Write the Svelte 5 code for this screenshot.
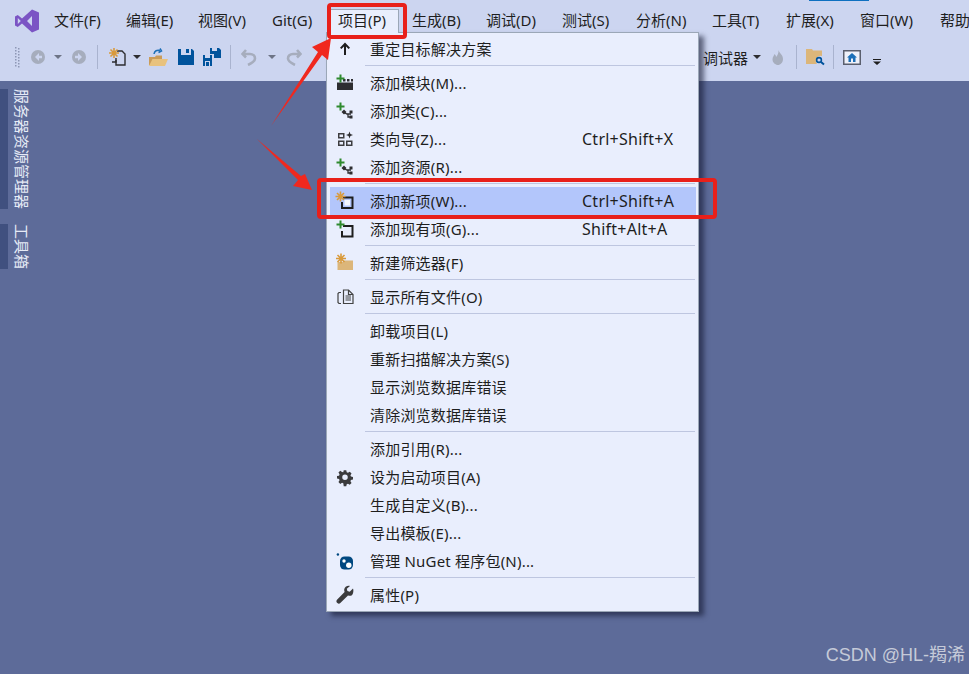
<script>
  const menus = [
    ['文件(F)', 54], ['编辑(E)', 126], ['视图(V)', 198], ['Git(G)', 272], ['项目(P)', 338], ['生成(B)', 412],
    ['调试(D)', 486], ['测试(S)', 562], ['分析(N)', 636], ['工具(T)', 712], ['扩展(X)', 786], ['窗口(W)', 860], ['帮助', 940]
  ];
  const widths = menus.map((m, i) => (i === 4 ? 61 : i < menus.length - 1 ? menus[i + 1][1] - m[1] : 60));
  const items = [
    { t: '重定目标解决方案', i: 'up' }, { sep: 1 },
    { t: '添加模块(M)...', i: 'module' },
    { t: '添加类(C)...', i: 'cls' },
    { t: '类向导(Z)...', i: 'wizard', k: 'Ctrl+Shift+X' },
    { t: '添加资源(R)...', i: 'cls' }, { sep: 1 },
    { t: '添加新项(W)...', i: 'newitem', k: 'Ctrl+Shift+A', on: 1 },
    { t: '添加现有项(G)...', i: 'existing', k: 'Shift+Alt+A' }, { sep: 1 },
    { t: '新建筛选器(F)', i: 'filter' }, { sep: 1 },
    { t: '显示所有文件(O)', i: 'files' }, { sep: 1 },
    { t: '卸载项目(L)' }, { t: '重新扫描解决方案(S)' }, { t: '显示浏览数据库错误' }, { t: '清除浏览数据库错误' }, { sep: 1 },
    { t: '添加引用(R)...' },
    { t: '设为启动项目(A)', i: 'gear' },
    { t: '生成自定义(B)...' }, { t: '导出模板(E)...' },
    { t: '管理 NuGet 程序包(N)...', i: 'nuget' }, { sep: 1 },
    { t: '属性(P)', i: 'wrench' }
  ];
</script>

{#snippet plus(x, y)}
  <path d="M{x - 1} {y - 4}h2v3h3v2h-3v3h-2v-3h-3v-2h3z" fill="#2f8a2f" />
{/snippet}
{#snippet star(x, y)}
  <path d="M{x} {y - 5}v10M{x - 5} {y}h10M{x - 3.5} {y - 3.5}l7 7M{x + 3.5} {y - 3.5}l-7 7" stroke="#d99a3c" stroke-width="1.6" fill="none" />
{/snippet}

{#snippet icon(n)}
  <svg class="mi" viewBox="0 0 20 20" width="20" height="20" aria-hidden="true">
    {#if n === 'up'}
      <path d="M10 3.5l5 5.2-1.4 1.3L11 7.4V16H9V7.4L6.4 10 5 8.7z" fill="#1e1e1e" />
    {:else if n === 'module'}
      <path d="M2 9.5h16V17H2z" fill="#2d2d30" />
      <path d="M8 6h2.5v2.5H8zM12 6h2.5v2.5H12zM16 6h2v2.5h-2z" fill="#2d2d30" />
      {@render plus(5.5, 5.5)}
    {:else if n === 'cls'}
      {@render plus(5.5, 5.5)}
      <path d="M9 11.500l3 1.500h4M13 13v3h3" fill="none" stroke="#2d2d30" stroke-width="1.300" />
      <path d="M9 8.500l2.500 2.500-2.500 2.500-2.500-2.500zM14.500 9.500h3v3h-3zM14.500 14.500h3v3h-3z" fill="#2d2d30" />
    {:else if n === 'wizard'}
      <path d="M3 4h6.500v5.500H3zM3 11.500h6.500V17H3zM11 11.500h6.500V17H11z" fill="#3d3d40" />
      <path d="M4.500 5.500h3.500v2.500h-3.500zM4.500 13h3.500v2.500h-3.500zM12.500 13h3.500v2.500h-3.500z" fill="#e9eefd" />
      <path d="M14.500 2.500l.9 2.600 2.600.9-2.600.9-.9 2.600-.9-2.600-2.600-.9 2.600-.9z" fill="#2d2d30" />
    {:else if n === 'newitem'}
      <path d="M8 6.500h9.500V17H7V11" fill="none" stroke="#1e1e1e" stroke-width="2" />
      <path d="M9.500 9h5.500v5.500H9.500z" fill="#f4f6fd" />
      {@render star(5.5, 5.5)}
    {:else if n === 'existing'}
      <path d="M8 7h9.500v10.500H7V12" fill="none" stroke="#1e1e1e" stroke-width="2" />
      {@render plus(5.5, 5.5)}
    {:else if n === 'filter'}
      <path d="M2.500 9h5l1.500-1.500h9V17h-15.500z" fill="#dcb67a" />
      {@render star(6, 5.5)}
    {:else if n === 'files'}
      <path d="M6 5.500H4l-1 1v9l1 1h2M13.500 3h-5v13.500h9.500V7.500z" fill="none" stroke="#424242" stroke-width="1.200" />
      <path d="M10.500 9h5.500M10.500 11h5.500M10.500 13h5.500M13.500 3v4.500h4.500" fill="none" stroke="#424242" stroke-width="1.200" />
    {:else if n === 'gear'}
      <path fill-rule="evenodd" fill="#3b3b3d" d="M8.500 2h3l.5 2.400 1.500.6 2.100-1.300 2.100 2.100-1.300 2.100.6 1.500 2.400.5v3l-2.400.5-.6 1.500 1.300 2.100-2.100 2.100-2.100-1.300-1.500.6-.5 2.400h-3L8 17.400l-1.500-.6-2.100 1.300-2.100-2.100 1.300-2.100-.6-1.500L.6 11.900v-3l2.400-.5.6-1.500-1.300-2.100 2.100-2.100 2.100 1.300L8 4.400zM10 7a3 3 0 1 0 0 6.500A3 3 0 0 0 10 7z" transform="translate(1.500 1.500) scale(.85)" />
    {:else if n === 'nuget'}
      <rect x="5" y="5.500" width="13" height="13" rx="4.500" fill="#004880" />
      <circle cx="2.900" cy="3.500" r="1.200" fill="#004880" />
      <circle cx="9" cy="10" r="1.700" fill="#fff" />
      <circle cx="13.800" cy="14.300" r="2.700" fill="#fff" />
    {:else if n === 'wrench'}
      <path d="M18 3.500l-3.300 3.200-2.300-.6-.6-2.300L15 1c-2.500-.8-5.500.8-5.800 3.500-.1 1 .1 1.800.4 2.600L2 14.800c-.8.8-.8 2.100 0 2.900l.4.400c.8.800 2.100.8 2.900 0l7.700-7.700c.9.300 1.700.5 2.700.4C18 10.500 19 6 18 3.500z" fill="#3b3b3d" />
    {/if}
  </svg>
{/snippet}

<div class="app">
  <header class="top">
    <div class="menubar">
      <svg class="logo" viewBox="0 0 24 24" width="24" height="24" aria-hidden="true">
        <path fill="#7b54c4" fill-rule="evenodd" d="M17 .5L24 3.500v17l-7 3L7 14.500 2.800 18 0 16.500v-9L2.800 6 7 9.500zM2.800 9v6l3-3zM17 7l-5 5 5 5z" />
      </svg>
      <nav class="menus">
        {#each menus as m, i}
          <span class="mitem" class:open={i === 4} style="width:{widths[i]}px">{m[0]}</span>
        {/each}
      </nav>
      <div class="winbtn"></div>
    </div>

    <div class="toolbar">
      <svg class="grip" width="6" height="22" aria-hidden="true">
        {#each [1, 4, 7, 10, 13, 16, 19] as y}
          <rect x="0" {y} width="1.500" height="1.500" fill="#8d97b5" /><rect x="3" y={y + 1} width="1.500" height="1.500" fill="#8d97b5" />
        {/each}
      </svg>
      <svg class="t t-back" width="16" height="16" viewBox="0 0 16 16" aria-hidden="true"><circle cx="8" cy="8" r="7" fill="#a6adbd" /><path d="M9 4L5 8l4 4V9.200h3V6.800H9z" fill="#ccd5f0" /></svg>
      <i class="drop grey"></i>
      <svg class="t t-fwd" width="16" height="16" viewBox="0 0 16 16" aria-hidden="true"><circle cx="8" cy="8" r="7" fill="#a6adbd" /><path d="M7 4l4 4-4 4V9.200H4V6.800h3z" fill="#ccd5f0" /></svg>
      <i class="tsep s1"></i>
      <svg class="t t-new" width="18" height="20" viewBox="0 0 18 20" aria-hidden="true">
        <path d="M8 4h5l3 3v11H7v-5" fill="none" stroke="#2d2d30" stroke-width="1.400" />
        <path d="M3 15h4v-4" fill="none" stroke="#2d2d30" stroke-width="1.400" />
        <path d="M5 1v10M0 6h10M1.500 2.500l7 7M8.500 2.500l-7 7" stroke="#d99a3c" stroke-width="1.600" />
      </svg>
      <i class="drop dark n"></i>
      <svg class="t t-open" width="19" height="19" viewBox="0 0 19 19" aria-hidden="true">
        <path d="M0 9h6l1-1.500h6V11H4l-2 6H0z" fill="#c99b5a" /><path d="M3.500 11H19l-3 7H0z" fill="#e8c27e" />
        <path d="M5 6c.5-3 3-4.500 6-3.500M11 .5l1.500 2.500L9.500 4.500" fill="none" stroke="#1c6fb8" stroke-width="1.500" />
      </svg>
      <svg class="t t-save" width="16" height="16" viewBox="0 0 16 16" aria-hidden="true">
        <path d="M0 0h3v6h10V0h1l2 2v14H0z" fill="#00539c" /><path d="M8 0h3v4H8z" fill="#00539c" /><path d="M3 10h10v6H3z" fill="#00539c" />
      </svg>
      <svg class="t t-saveall" width="18" height="18" viewBox="0 0 18 18" aria-hidden="true">
        <path d="M7 0h2v3h5V0h2l2 2v8h-7V6H7z" fill="#00539c" /><path d="M0 7h2v3h5V7h2v11H0z" fill="#00539c" />
        <path d="M2 13h5v5H2z" fill="#ccd5f0" /><path d="M3 14h3v4H3z" fill="#00539c" />
      </svg>
      <i class="tsep s2"></i>
      <svg class="t t-undo" width="16" height="17" viewBox="0 0 16 17" aria-hidden="true"><path d="M5 1L1.500 5 5 8.500M2 5h7c3 0 5 2 5 4.500S11 14 7 16" fill="none" stroke="#a6adbd" stroke-width="2.600" /></svg>
      <i class="drop grey u"></i>
      <svg class="t t-redo" width="16" height="17" viewBox="0 0 16 17" aria-hidden="true"><path d="M11 1l3.500 4L11 8.500M14 5H7C4 5 2 7 2 9.500S5 14 9 16" fill="none" stroke="#a6adbd" stroke-width="2.600" /></svg>
      <span class="spacer"></span>
      <span class="dbg">调试器</span>
      <i class="drop dark d2"></i>
      <svg class="t t-flame" width="12" height="15" viewBox="0 0 12 15" aria-hidden="true"><path d="M6.500 0c.5 3 4.500 4.500 4.500 9 0 3.500-2.500 6-5 6s-5.500-2.500-5.500-5.500C.5 7 2 6 2.500 4c1 .8 1.500 1.800 1.500 3C5.500 5.500 6.800 3 6.500 0z" fill="#a6adbd" /></svg>
      <i class="tsep s3"></i>
      <svg class="t t-folder" width="20" height="18" viewBox="0 0 20 18" aria-hidden="true">
        <path d="M0 1h6l1 1.500h9V8a5 5 0 0 0-5 8H0z" fill="#dcb67a" /><circle cx="13" cy="12" r="2.400" fill="none" stroke="#00539c" stroke-width="1.600" /><path d="M15 14l3 2.500" stroke="#00539c" stroke-width="2" />
      </svg>
      <i class="tsep s4"></i>
      <svg class="t t-home" width="18" height="15" viewBox="0 0 18 15" aria-hidden="true">
        <path d="M.75.75h16.500v13.500H.75z" fill="#eef1fa" stroke="#5a5f6e" stroke-width="1.500" />
        <path d="M9 3L4 7.500h1.500V12h7V7.500H14z" fill="#1c6fb8" /><path d="M8 8.500h2V12H8z" fill="#eef1fa" />
      </svg>
      <svg class="t t-over" width="8" height="6" viewBox="0 0 8 6" aria-hidden="true"><path d="M0 0h8v1H0zM0 2.500h8L4 6z" fill="#1e1e1e" /></svg>
    </div>
  </header>

  <aside class="side">
    <div class="stab"><i></i><span>服务器资源管理器</span></div>
    <div class="stab"><i></i><span>工具箱</span></div>
  </aside>

  <div class="menu">
    {#each items as it}
      {#if it.sep}
        <div class="sep"></div>
      {:else}
        <div class="row" class:on={it.on}>
          <span class="ic">{#if it.i}{@render icon(it.i)}{/if}</span>
          <span class="lb">{it.t}</span>
          <span class="kb">{it.k ?? ''}</span>
        </div>
      {/if}
    {/each}
  </div>

  <div class="red r1"></div>
  <div class="red r2"></div>
  <svg class="arrows" width="969" height="674" viewBox="0 0 969 674" aria-hidden="true">
    <path d="M271 126L318 52 312 47 331 38 328 60 322 55z" fill="#f0281e" />
    <path d="M257 139L301 176 305 174 312 190 293 186 298 180z" fill="#f0281e" />
  </svg>
  <div class="mark">CSDN @HL-羯浠</div>
</div>

<style>
  :global(body) { margin: 0; }
  .app {
    position: relative;
    width: 969px;
    height: 674px;
    overflow: hidden;
    background: #5d6b99;
    font-family: "Noto Sans", "Noto Sans CJK SC", sans-serif;
    font-size: 15px;
    color: #1e1e1e;
  }
  .top {
    background: #ccd5f0;
    height: 81px;
  }
  .menubar {
    display: flex;
    align-items: center;
    height: 42px;
    position: relative;
  }
  .logo { margin-left: 15px; flex: none; }
  .menus { display: flex; margin-left: 15px; white-space: nowrap; }
  .mitem {
    flex: none;
    height: 24px;
    line-height: 23px;
    box-sizing: border-box;
  }
  .mitem.open {
    position: relative;
    z-index: 2;
    box-sizing: content-box;
    margin-left: -8px;
    padding-left: 8px;
    margin-right: 13px;
    background: #e9eefd;
    box-shadow: inset 1px 1px 0 #9ba7b7, inset -1px 0 0 #9ba7b7;
  }
  .winbtn {
    position: absolute;
    left: 809px;
    top: 0;
    width: 60px;
    height: 1px;
    background: #0e70c0;
  }
  .toolbar {
    display: flex;
    align-items: center;
    height: 30px;
    padding-left: 15px;
    width: 866px;
  }
  .t { flex: none; display: block; }
  .grip { flex: none; }
  .t-back { margin-left: 9px; }
  .drop {
    flex: none;
    width: 0;
    height: 0;
    border: 4px solid transparent;
    border-bottom: 0;
    border-top-width: 4px;
  }
  .drop.grey { border-top-color: #6d7486; margin-left: 8px; }
  .drop.dark { border-top-color: #2d2d30; margin-left: 5px; }
  .drop.n { margin-left: 6px; }
  .t-fwd { margin-left: 9px; }
  .tsep { flex: none; width: 1px; height: 24px; background: #a9b3cf; }
  .s1 { margin-left: 10px; }
  .t-new { margin-left: 11px; }
  .t-open { margin-left: 8px; }
  .t-save { margin-left: 10px; }
  .t-saveall { margin-left: 9px; }
  .s2 { margin-left: 9px; }
  .t-undo { margin-left: 10px; }
  .drop.u { margin-left: 11px; }
  .t-redo { margin-left: 10px; }
  .spacer { flex: 1; }
  .dbg { flex: none; }
  .drop.d2 { margin-left: 5px; }
  .t-flame { margin-left: 11px; }
  .s3 { margin-left: 12px; }
  .t-folder { margin-left: 9px; }
  .s4 { margin-left: 7px; }
  .t-home { margin-left: 9px; }
  .t-over { margin-left: 12px; margin-top: 10px; }

  .side {
    display: flex;
    flex-direction: column;
    gap: 15px;
    padding-top: 8px;
  }
  .stab { display: flex; }
  .stab i { width: 8px; background: #40507f; flex: none; }
  .stab span {
    writing-mode: vertical-rl;
    text-orientation: sideways;
    font-size: 15px;
    line-height: 15px;
    margin-left: 6px;
    color: #e6eaf6;
  }

  .menu {
    position: absolute;
    left: 326px;
    top: 32px;
    width: 373px;
    height: 580px;
    box-sizing: border-box;
    padding: 2px 2px 2px 3px;
    background: #e9eefd;
    border: 1px solid #9ba7b7;
    box-shadow: 5px 4px 5px rgba(20, 25, 50, 0.6);
    z-index: 1;
  }
  .row {
    display: grid;
    grid-template-columns: 40px 212px 1fr;
    align-items: center;
    height: 28px;
    white-space: nowrap;
  }
  .row.on { background: #b3c6fb; }
  .ic { display: flex; justify-content: center; width: 30px; }
  .mi { display: block; }
  .lb { letter-spacing: 0.2px; padding-bottom: 1px; }
  .kb { font-size: 16px; letter-spacing: 0.25px; padding-bottom: 1px; }
  .sep { height: 1px; margin: 2px 1px 3px 35px; background: #bec6e0; }
  .red {
    position: absolute;
    border: 4px solid #e8201a;
    border-radius: 4px;
    box-sizing: border-box;
    z-index: 3;
  }
  .r1 { left: 327px; top: 3px; width: 80px; height: 36px; }
  .r2 { left: 317px; top: 178px; width: 400px; height: 41px; }
  .arrows { position: absolute; left: 0; top: 0; z-index: 3; pointer-events: none; }
  .mark {
    position: absolute;
    right: 4px;
    top: 643px;
    font-size: 18px;
    line-height: 24px;
    font-family: "Liberation Sans", "Noto Sans CJK SC", sans-serif;
    color: #c5cad8;
    z-index: 3;
  }
</style>
